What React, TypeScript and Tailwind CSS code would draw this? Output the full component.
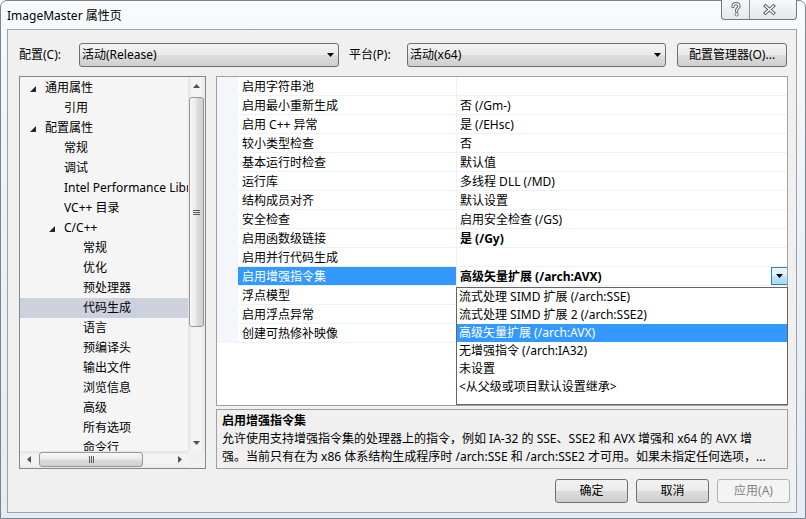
import React from "react";

type TreeItem = { t: string; l: 0 | 1 | 2; exp?: boolean; sel?: boolean };

const treeItems: TreeItem[] = [
  { t: "通用属性", l: 0, exp: true },
  { t: "引用", l: 1 },
  { t: "配置属性", l: 0, exp: true },
  { t: "常规", l: 1 },
  { t: "调试", l: 1 },
  { t: "Intel Performance Library", l: 1 },
  { t: "VC++ 目录", l: 1 },
  { t: "C/C++", l: 1, exp: true },
  { t: "常规", l: 2 },
  { t: "优化", l: 2 },
  { t: "预处理器", l: 2 },
  { t: "代码生成", l: 2, sel: true },
  { t: "语言", l: 2 },
  { t: "预编译头", l: 2 },
  { t: "输出文件", l: 2 },
  { t: "浏览信息", l: 2 },
  { t: "高级", l: 2 },
  { t: "所有选项", l: 2 },
  { t: "命令行", l: 2 },
];

const indent: Record<number, string> = { 0: "w-[6px]", 1: "w-[25px]", 2: "w-[44px]" };

type Prop = { n: string; v: string; b?: boolean; s?: boolean };
const props: Prop[] = [
  { n: "启用字符串池", v: "" },
  { n: "启用最小重新生成", v: "否 (/Gm-)" },
  { n: "启用 C++ 异常", v: "是 (/EHsc)" },
  { n: "较小类型检查", v: "否" },
  { n: "基本运行时检查", v: "默认值" },
  { n: "运行库", v: "多线程 DLL (/MD)" },
  { n: "结构成员对齐", v: "默认设置" },
  { n: "安全检查", v: "启用安全检查 (/GS)" },
  { n: "启用函数级链接", v: "是 (/Gy)", b: true },
  { n: "启用并行代码生成", v: "" },
  { n: "启用增强指令集", v: "高级矢量扩展 (/arch:AVX)", b: true, s: true },
  { n: "浮点模型", v: "" },
  { n: "启用浮点异常", v: "" },
  { n: "创建可热修补映像", v: "" },
];

const options = [
  "流式处理 SIMD 扩展 (/arch:SSE)",
  "流式处理 SIMD 扩展 2 (/arch:SSE2)",
  "高级矢量扩展 (/arch:AVX)",
  "无增强指令 (/arch:IA32)",
  "未设置",
  "<从父级或项目默认设置继承>",
];

function Combo({ text, w }: { text: string; w: string }) {
  return (
    <div
      className={`${w} h-[24px] flex items-center border border-[#707070] rounded-[3px] bg-[linear-gradient(180deg,#f2f2f2_0%,#ebebeb_50%,#dddddd_50%,#cfcfcf_100%)] pl-[2px] pr-[4px]`}
    >
      <span className="flex-1 whitespace-nowrap">{text}</span>
      <svg width="7" height="4" viewBox="0 0 7 4">
        <path d="M0 0H7L3.5 4Z" fill="#000" />
      </svg>
    </div>
  );
}

function Btn({ children, w, disabled }: { children: React.ReactNode; w: string; disabled?: boolean }) {
  return (
    <div
      className={`${w} h-[24px] flex items-center justify-center rounded-[3px] border whitespace-nowrap ${
        disabled
          ? "border-[#adb2b5] bg-[#f4f4f4] text-[#838383]"
          : "border-[#707070] bg-[linear-gradient(180deg,#f2f2f2_0%,#ebebeb_50%,#dddddd_50%,#cfcfcf_100%)] text-black"
      }`}
    >
      {children}
    </div>
  );
}

function Arrow({ dir }: { dir: "up" | "down" | "left" | "right" }) {
  const d =
    dir === "up"
      ? "M0 4L3.5 0L7 4Z"
      : dir === "down"
      ? "M0 0H7L3.5 4Z"
      : dir === "left"
      ? "M4 0V7L0 3.5Z"
      : "M0 0V7L4 3.5Z";
  const horiz = dir === "left" || dir === "right";
  return (
    <svg width={horiz ? 4 : 7} height={horiz ? 7 : 4} viewBox={horiz ? "0 0 4 7" : "0 0 7 4"}>
      <path d={d} fill="#505050" />
    </svg>
  );
}

function VScroll() {
  return (
    <div className="w-[17px] shrink-0 h-full flex flex-col bg-[linear-gradient(90deg,#e4e4e4_0%,#f3f3f3_25%,#f3f3f3_75%,#e9e9e9_100%)]">
      <div className="h-[17px] shrink-0 flex items-center justify-center">
        <Arrow dir="up" />
      </div>
      <div className="h-[3px] shrink-0" />
      <div className="h-[230px] shrink-0 mx-[1px] border border-[#979797] rounded-[3px] bg-[linear-gradient(90deg,#f7f7f7_0%,#ececec_45%,#dcdcdc_55%,#d0d0d0_100%)] flex flex-col items-center justify-center gap-[1px]">
        <div className="w-[7px] h-[1px] bg-[#5a5a5a]" />
        <div className="w-[7px] h-[1px] bg-[#5a5a5a]" />
        <div className="w-[7px] h-[1px] bg-[#5a5a5a]" />
      </div>
      <div className="flex-1" />
      <div className="h-[17px] shrink-0 flex items-center justify-center">
        <Arrow dir="down" />
      </div>
    </div>
  );
}

function HScroll() {
  return (
    <div className="flex-1 h-full flex bg-[linear-gradient(180deg,#e4e4e4_0%,#f3f3f3_25%,#f3f3f3_75%,#e9e9e9_100%)]">
      <div className="w-[17px] shrink-0 flex items-center justify-center">
        <Arrow dir="left" />
      </div>
      <div className="w-[2px] shrink-0" />
      <div className="w-[104px] shrink-0 my-[1px] border border-[#979797] rounded-[3px] bg-[linear-gradient(180deg,#f7f7f7_0%,#ececec_45%,#dcdcdc_55%,#d0d0d0_100%)] flex items-center justify-center gap-[1px]">
        <div className="w-[1px] h-[7px] bg-[#5a5a5a]" />
        <div className="w-[1px] h-[7px] bg-[#5a5a5a]" />
        <div className="w-[1px] h-[7px] bg-[#5a5a5a]" />
      </div>
      <div className="flex-1" />
      <div className="w-[17px] shrink-0 flex items-center justify-center">
        <Arrow dir="right" />
      </div>
    </div>
  );
}

export default function App() {
  return (
    <div className="w-[806px] h-[519px] overflow-hidden font-['Noto_Sans','Noto_Sans_CJK_SC',sans-serif] text-[12px] leading-[18px] text-black">
      <div className="w-full h-full flex flex-col border border-[#7b848d] rounded-t-[7px] bg-[linear-gradient(180deg,#f8fafc_0%,#edf2f6_40%,#e6ecf2_100%)] pl-[6px] pr-[8px] pb-[5px]">
        {/* title bar */}
        <div className="h-[28px] shrink-0 flex items-start">
          <div className="pt-[6px] whitespace-nowrap">ImageMaster 属性页</div>
          <div className="ml-auto -mt-[1px] flex h-[20px] border border-t-0 border-[#6f7881] rounded-b-[4px] bg-[linear-gradient(180deg,#f6f8fa_0%,#e4e8ec_100%)] overflow-hidden">
            <div className="w-[28px] border-r border-[#8a939b] flex items-center justify-center">
              <svg width="12" height="15" viewBox="0 0 12 15">
                <path
                  d="M3 4.6C3 2.8 4.3 1.6 6 1.6C7.7 1.6 9 2.7 9 4.3C9 6.1 6.6 6.4 6.6 8.6V9.2"
                  fill="none"
                  stroke="#5f666d"
                  strokeWidth="3.2"
                  strokeLinecap="round"
                />
                <path
                  d="M3 4.6C3 2.8 4.3 1.6 6 1.6C7.7 1.6 9 2.7 9 4.3C9 6.1 6.6 6.4 6.6 8.6V9.2"
                  fill="none"
                  stroke="#ffffff"
                  strokeWidth="1.3"
                  strokeLinecap="round"
                />
                <circle cx="6.6" cy="12.4" r="1.6" fill="#fff" stroke="#5f666d" strokeWidth="0.9" />
              </svg>
            </div>
            <div className="w-[46px] flex items-center justify-start pl-[13px]">
              <svg width="13" height="11" viewBox="0 0 13 11">
                <path d="M2.5 2L10.5 9M10.5 2L2.5 9" stroke="#5f666d" strokeWidth="3.4" strokeLinecap="square" />
                <path d="M2.5 2L10.5 9M10.5 2L2.5 9" stroke="#ffffff" strokeWidth="1.4" strokeLinecap="square" />
              </svg>
            </div>
          </div>
        </div>

        {/* client area */}
        <div className="flex-1 min-h-0 border border-[#9aa2aa] bg-[#f0f0f0] flex flex-col">
          {/* top row */}
          <div className="mt-[13px] pl-[11px] flex items-center h-[24px] shrink-0">
            <div className="w-[60px] whitespace-nowrap">配置(C):</div>
            <Combo text="活动(Release)" w="w-[260px]" />
            <div className="ml-[10px] w-[58px] whitespace-nowrap">平台(P):</div>
            <Combo text="活动(x64)" w="w-[259px]" />
            <div className="ml-[11px]">
              <Btn w="w-[110px]">配置管理器(O)...</Btn>
            </div>
          </div>

          {/* main */}
          <div className="mt-[9px] pl-[11px] flex gap-[10px] h-[393px] shrink-0">
            {/* tree */}
            <div className="w-[187px] h-full border border-[#828790] bg-[#f5f5f5] flex flex-col">
              <div className="flex-1 flex min-h-0">
                <div className="flex-1 overflow-hidden pt-[1px]">
                  {treeItems.map((it, i) => (
                    <div
                      key={i}
                      className={`h-[20px] flex items-center whitespace-nowrap overflow-hidden leading-[20px] ${
                        it.sel ? "bg-[#cdd0dd]" : ""
                      }`}
                    >
                      <div className={`${indent[it.l]} shrink-0`} />
                      <div className="w-[19px] shrink-0 h-full flex items-center pl-[4px]">
                        {it.exp && (
                          <svg width="7" height="7" viewBox="0 0 7 7" className="mt-[3px]">
                            <path d="M6 0V6H0Z" fill="#262626" />
                          </svg>
                        )}
                      </div>
                      <span>{it.t}</span>
                    </div>
                  ))}
                </div>
                <VScroll />
              </div>
              <div className="h-[17px] shrink-0 flex">
                <HScroll />
                <div className="w-[17px] shrink-0 bg-[#f0f0f0]" />
              </div>
            </div>

            {/* right side */}
            <div className="w-[572px] h-full flex flex-col">
              <div className="h-[330px] shrink-0 border border-[#a0a0a0] bg-white relative">
                {props.map((p, i) => (
                  <div key={i} className="h-[19px] flex">
                    <div className="w-[21px] bg-[#f3f6fb]" />
                    <div
                      className={`w-[218px] pl-[4px] pt-[1px] border-b border-[#eef1f6] whitespace-nowrap overflow-hidden ${
                        p.s ? "bg-[#3399ff] text-white" : ""
                      }`}
                    >
                      {p.n}
                    </div>
                    <div className="flex-1 flex border-b border-l border-[#eef1f6] pl-[3px] whitespace-nowrap overflow-hidden">
                      <span className={`flex-1 pt-[1px] ${p.b ? "font-bold" : ""}`}>{p.v}</span>
                      {p.s && (
                        <div className="w-[17px] h-[18px] -mr-[1px] border border-[#3c7fb1] bg-[linear-gradient(180deg,#eaf6fd_0%,#d9f0fc_50%,#bee6fd_50%,#a7d9f5_100%)] flex items-center justify-center">
                          <svg width="7" height="4" viewBox="0 0 7 4">
                            <path d="M0 0H7L3.5 4Z" fill="#000" />
                          </svg>
                        </div>
                      )}
                    </div>
                  </div>
                ))}
                {/* dropdown list */}
                <div className="absolute left-[239px] top-[210px] -right-[1px] h-[118px] border border-[#646464] bg-white">
                  {options.map((o, i) => (
                    <div
                      key={i}
                      className={`h-[18px] pl-[2px] whitespace-nowrap ${i === 2 ? "bg-[#3399ff] text-white" : ""}`}
                    >
                      {o}
                    </div>
                  ))}
                </div>
              </div>
              <div className="mt-[3px] flex-1 border border-[#a0a0a0] bg-[#f0f0f0] pl-[5px] pt-[2px] overflow-hidden whitespace-nowrap">
                <div className="font-bold">启用增强指令集</div>
                <div>允许使用支持增强指令集的处理器上的指令，例如 IA-32 的 SSE、SSE2 和 AVX 增强和 x64 的 AVX 增</div>
                <div>强。当前只有在为 x86 体系结构生成程序时 /arch:SSE 和 /arch:SSE2 才可用。如果未指定任何选项，...</div>
              </div>
            </div>
          </div>

          {/* buttons */}
          <div className="mt-[10px] flex justify-end gap-[8px] pr-[6px] shrink-0">
            <Btn w="w-[73px]">确定</Btn>
            <Btn w="w-[73px]">取消</Btn>
            <Btn w="w-[73px]" disabled>
              应用(A)
            </Btn>
          </div>
        </div>
      </div>
    </div>
  );
}
